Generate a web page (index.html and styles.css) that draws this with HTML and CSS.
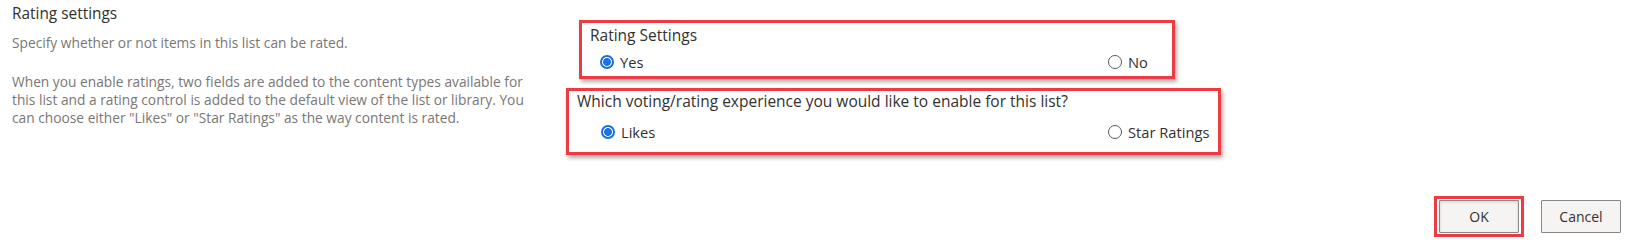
FILE: index.html
```html
<!DOCTYPE html>
<html lang="en">
<head>
<meta charset="utf-8">
<title>Rating settings</title>
<link rel="stylesheet" href="styles.css">
</head>
<body>
<div class="page">
  <div class="section">
    <div class="desc-col">
      <h2 class="sec-title">Rating settings</h2>
      <p class="sec-text first">Specify whether or not items in this list can be rated.</p>
      <p class="sec-text">When you enable ratings, two fields are added to the content types available for<br>this list and a rating control is added to the default view of the list or library. You<br>can choose either "Likes" or "Star Ratings" as the way content is rated.</p>
    </div>
    <div class="form-col">
      <div class="hl hl-a">
        <div class="q-title">Rating Settings</div>
        <div class="opts opts-a">
          <label class="opt opt-first"><span class="radio checked"></span><span>Yes</span></label>
          <label class="opt"><span class="radio"></span><span>No</span></label>
        </div>
      </div>
      <div class="hl hl-b">
        <div class="q-title">Which voting/rating experience you would like to enable for this list?</div>
        <div class="opts opts-b">
          <label class="opt opt-first"><span class="radio checked"></span><span>Likes</span></label>
          <label class="opt"><span class="radio"></span><span>Star Ratings</span></label>
        </div>
      </div>
    </div>
  </div>
  <div class="footer">
    <div class="hl hl-btn"><button class="btn">OK</button></div>
    <button class="btn">Cancel</button>
  </div>
</div>
</body>
</html>
```
FILE: styles.css
```css
* { box-sizing: border-box; }
html, body { margin: 0; padding: 0; background: #fff; }
body {
  font-family: "Open Sans", "Noto Sans", "Liberation Sans", sans-serif;
  color: #323130;
  width: 1634px;
  height: 240px;
  overflow: hidden;
}
.page { display: flex; flex-direction: column; }
.section { display: flex; }
.desc-col { width: 566px; padding: 4px 0 0 12px; }
.sec-title {
  margin: 0;
  font-size: 15.4px;
  font-weight: 400;
  line-height: 20px;
  color: #323130;
}
.sec-text {
  margin: 21px 0 0;
  font-size: 13.75px;
  line-height: 18px;
  color: #797775;
}
.sec-text.first { margin-top: 9.5px; }

.form-col { display: flex; flex-direction: column; padding-top: 20px; }
.hl {
  border: 3px solid #ee3a43;
  box-shadow: 2px 3px 4px rgba(0, 0, 0, 0.32);
}
.hl-a { margin-left: 13px; width: 596px; height: 59px; padding: 2px 0 0 8px; }
.hl-b { margin-top: 9px; width: 655px; height: 67px; padding: 0 0 0 8px; }
.q-title { line-height: 20px; font-size: 15.5px; color: #323130; }
.opts { display: flex; align-items: center; height: 20px; margin-top: 7px; }
.opts-a { padding-left: 10px; }
.opts-b { margin-top: 11px; padding-left: 24px; }
.opt { display: flex; align-items: center; gap: 6px; font-size: 14.7px; color: #323130; }
.opts-a .opt-first { width: 508px; }
.opts-b .opt-first { width: 507px; }
.radio {
  width: 14px;
  height: 14px;
  border: 1px solid #5a5a5a;
  border-radius: 50%;
  flex: none;
  background: #fff;
}
.radio.checked {
  border: 2px solid #1a6fd8;
  background: radial-gradient(circle, #1a73e8 0 3.6px, #fff 4.2px);
}

.footer {
  display: flex;
  justify-content: flex-end;
  align-items: center;
  gap: 17px;
  padding-right: 13px;
  margin-top: 41px;
}
.hl-btn { padding: 1px 2px 1px 2px; box-shadow: none; }
.btn {
  width: 80px;
  height: 33px;
  background: #f6f4f2;
  border: 1px solid #8a8886;
  border-radius: 1px;
  font-family: inherit;
  font-size: 14px;
  color: #323130;
  padding: 0;
}
.hl-btn .btn { box-shadow: inset 0 1px 3px rgba(0, 0, 0, 0.15); }
```
